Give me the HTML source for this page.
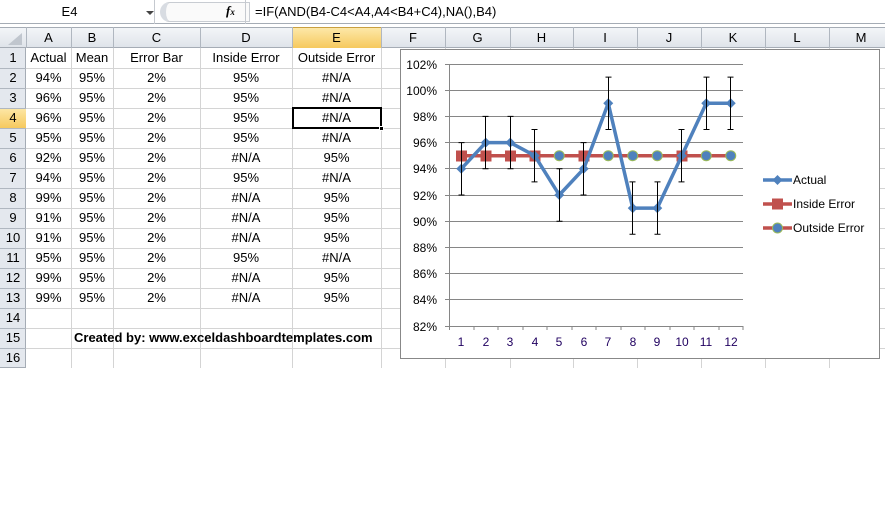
<!DOCTYPE html>
<html><head><meta charset="utf-8"><style>
*{margin:0;padding:0;box-sizing:border-box}
body{width:885px;height:512px;background:#fff;position:relative;overflow:hidden;font-family:"Liberation Sans",sans-serif;font-size:13px;color:#000}
.a{position:absolute}
.c{position:absolute;text-align:center;line-height:20px;height:20px;white-space:nowrap}
</style></head><body>
<div class="a" style="left:0;top:0;width:885px;height:24px;background:#fff;border-bottom:1px solid #a5acb5"></div>
<div class="a" style="left:0;top:0;width:155px;height:24px;border-right:1px solid #c5c9cf;text-align:center;line-height:24px;padding-right:15px">E4</div>
<div class="a" style="left:146px;top:11px;width:0;height:0;border-left:4px solid transparent;border-right:4px solid transparent;border-top:4px solid #444"></div>
<div class="a" style="left:160px;top:2px;width:90px;height:20px;border:1px solid #c8ccd2;border-left:6px solid #d8dce2;border-radius:10px 0 0 10px;background:#fafafa"></div>
<div class="a" style="left:226px;top:3px;font-family:'Liberation Serif',serif;font-style:italic;font-weight:bold;font-size:13px">f<span style="font-size:9px">x</span></div>
<div class="a" style="left:245px;top:0;width:640px;height:24px;border-left:1px solid #c5c9cf;line-height:24px;padding-left:9px">=IF(AND(B4-C4&lt;A4,A4&lt;B4+C4),NA(),B4)</div>
<div class="a" style="left:0;top:27px;width:885px;height:21px;background:linear-gradient(#f3f5f8,#dfe4ea);border-top:1px solid #a5acb5;border-bottom:1px solid #a5acb5"></div>
<div class="a" style="left:292px;top:27px;width:89px;height:21px;background:linear-gradient(#fde8a8,#f6c95e);border-top:1px solid #c9a040"></div>
<div class="a" style="left:0;top:48px;width:26px;height:320px;background:#e4e8ee;border-right:1px solid #a5acb5"></div>
<div class="a" style="left:0;top:108px;width:26px;height:20px;background:linear-gradient(#fde8a8,#f6c95e)"></div>
<div class="a" style="left:0;top:367px;width:26px;height:1px;background:#a5acb5"></div>
<svg class="a" style="left:0;top:27px" width="885" height="341">
<g stroke="#d4d4d4" stroke-width="1">
<line x1="26" y1="41.5" x2="885" y2="41.5"/><line x1="26" y1="61.5" x2="885" y2="61.5"/><line x1="26" y1="81.5" x2="885" y2="81.5"/><line x1="26" y1="101.5" x2="885" y2="101.5"/><line x1="26" y1="121.5" x2="885" y2="121.5"/><line x1="26" y1="141.5" x2="885" y2="141.5"/><line x1="26" y1="161.5" x2="885" y2="161.5"/><line x1="26" y1="181.5" x2="885" y2="181.5"/><line x1="26" y1="201.5" x2="885" y2="201.5"/><line x1="26" y1="221.5" x2="885" y2="221.5"/><line x1="26" y1="241.5" x2="885" y2="241.5"/><line x1="26" y1="261.5" x2="885" y2="261.5"/><line x1="26" y1="281.5" x2="885" y2="281.5"/><line x1="26" y1="301.5" x2="885" y2="301.5"/><line x1="26" y1="321.5" x2="885" y2="321.5"/>
<line x1="71.5" y1="21" x2="71.5" y2="341"/><line x1="113.5" y1="21" x2="113.5" y2="341"/><line x1="200.5" y1="21" x2="200.5" y2="341"/><line x1="292.5" y1="21" x2="292.5" y2="341"/><line x1="381.5" y1="21" x2="381.5" y2="341"/><line x1="445.5" y1="21" x2="445.5" y2="341"/><line x1="510.5" y1="21" x2="510.5" y2="341"/><line x1="573.5" y1="21" x2="573.5" y2="341"/><line x1="637.5" y1="21" x2="637.5" y2="341"/><line x1="701.5" y1="21" x2="701.5" y2="341"/><line x1="765.5" y1="21" x2="765.5" y2="341"/><line x1="829.5" y1="21" x2="829.5" y2="341"/>
</g>
<g stroke="#b0b7c0"><line x1="26.5" y1="0" x2="26.5" y2="21"/><line x1="71.5" y1="0" x2="71.5" y2="21"/><line x1="113.5" y1="0" x2="113.5" y2="21"/><line x1="200.5" y1="0" x2="200.5" y2="21"/><line x1="292.5" y1="0" x2="292.5" y2="21"/><line x1="381.5" y1="0" x2="381.5" y2="21"/><line x1="445.5" y1="0" x2="445.5" y2="21"/><line x1="510.5" y1="0" x2="510.5" y2="21"/><line x1="573.5" y1="0" x2="573.5" y2="21"/><line x1="637.5" y1="0" x2="637.5" y2="21"/><line x1="701.5" y1="0" x2="701.5" y2="21"/><line x1="765.5" y1="0" x2="765.5" y2="21"/><line x1="829.5" y1="0" x2="829.5" y2="21"/>
<line x1="0" y1="41.5" x2="26" y2="41.5"/><line x1="0" y1="61.5" x2="26" y2="61.5"/><line x1="0" y1="81.5" x2="26" y2="81.5"/><line x1="0" y1="101.5" x2="26" y2="101.5"/><line x1="0" y1="121.5" x2="26" y2="121.5"/><line x1="0" y1="141.5" x2="26" y2="141.5"/><line x1="0" y1="161.5" x2="26" y2="161.5"/><line x1="0" y1="181.5" x2="26" y2="181.5"/><line x1="0" y1="201.5" x2="26" y2="201.5"/><line x1="0" y1="221.5" x2="26" y2="221.5"/><line x1="0" y1="241.5" x2="26" y2="241.5"/><line x1="0" y1="261.5" x2="26" y2="261.5"/><line x1="0" y1="281.5" x2="26" y2="281.5"/><line x1="0" y1="301.5" x2="26" y2="301.5"/><line x1="0" y1="321.5" x2="26" y2="321.5"/></g>
<polygon points="8,18 22,18 22,6" fill="#c0c6ce"/>
</svg>
<div class="c" style="top:28px;left:26px;width:45px">A</div><div class="c" style="top:28px;left:71px;width:42px">B</div><div class="c" style="top:28px;left:113px;width:87px">C</div><div class="c" style="top:28px;left:200px;width:92px">D</div><div class="c" style="top:28px;left:292px;width:89px">E</div><div class="c" style="top:28px;left:381px;width:64px">F</div><div class="c" style="top:28px;left:445px;width:65px">G</div><div class="c" style="top:28px;left:510px;width:63px">H</div><div class="c" style="top:28px;left:573px;width:64px">I</div><div class="c" style="top:28px;left:637px;width:64px">J</div><div class="c" style="top:28px;left:701px;width:64px">K</div><div class="c" style="top:28px;left:765px;width:64px">L</div><div class="c" style="top:28px;left:829px;width:64px">M</div>
<div class="a" style="left:0;top:48px;width:26px;line-height:20px;text-align:center">1<br>2<br>3<br>4<br>5<br>6<br>7<br>8<br>9<br>10<br>11<br>12<br>13<br>14<br>15<br>16</div>
<div class="a" style="left:26px;top:48px;width:45px;line-height:20px;text-align:center">Actual<br>94%<br>96%<br>96%<br>95%<br>92%<br>94%<br>99%<br>91%<br>91%<br>95%<br>99%<br>99%</div>
<div class="a" style="left:71px;top:48px;width:42px;line-height:20px;text-align:center">Mean<br>95%<br>95%<br>95%<br>95%<br>95%<br>95%<br>95%<br>95%<br>95%<br>95%<br>95%<br>95%</div>
<div class="a" style="left:113px;top:48px;width:87px;line-height:20px;text-align:center">Error Bar<br>2%<br>2%<br>2%<br>2%<br>2%<br>2%<br>2%<br>2%<br>2%<br>2%<br>2%<br>2%</div>
<div class="a" style="left:200px;top:48px;width:92px;line-height:20px;text-align:center">Inside Error<br>95%<br>95%<br>95%<br>95%<br>#N/A<br>95%<br>#N/A<br>#N/A<br>#N/A<br>95%<br>#N/A<br>#N/A</div>
<div class="a" style="left:292px;top:48px;width:89px;line-height:20px;text-align:center">Outside Error<br>#N/A<br>#N/A<br>#N/A<br>#N/A<br>95%<br>#N/A<br>95%<br>95%<br>95%<br>#N/A<br>95%<br>95%</div>
<div class="a" style="left:292px;top:107px;width:90px;height:22px;border:2px solid #000"></div>
<div class="a" style="left:379px;top:126px;width:5px;height:5px;background:#000;border:1px solid #fff"></div>
<div class="a" style="left:74px;top:328px;line-height:20px;font-weight:bold;white-space:nowrap">Created by: www.exceldashboardtemplates.com</div>
<svg class="a" style="left:0;top:0" width="885" height="512" font-family="Liberation Sans, sans-serif" font-size="12">
<rect x="400.5" y="49.5" width="479" height="309" fill="#fff" stroke="#888"/>
<g stroke="#868686" stroke-width="1">
<line x1="449" y1="64.5" x2="743" y2="64.5"/><line x1="449" y1="90.5" x2="743" y2="90.5"/><line x1="449" y1="116.5" x2="743" y2="116.5"/><line x1="449" y1="142.5" x2="743" y2="142.5"/><line x1="449" y1="168.5" x2="743" y2="168.5"/><line x1="449" y1="195.5" x2="743" y2="195.5"/><line x1="449" y1="221.5" x2="743" y2="221.5"/><line x1="449" y1="247.5" x2="743" y2="247.5"/><line x1="449" y1="273.5" x2="743" y2="273.5"/><line x1="449" y1="299.5" x2="743" y2="299.5"/><line x1="445" y1="326.5" x2="743" y2="326.5"/>
<line x1="449.5" y1="64" x2="449.5" y2="326"/>
<line x1="445" y1="64.5" x2="449" y2="64.5"/><line x1="445" y1="90.5" x2="449" y2="90.5"/><line x1="445" y1="116.5" x2="449" y2="116.5"/><line x1="445" y1="142.5" x2="449" y2="142.5"/><line x1="445" y1="168.5" x2="449" y2="168.5"/><line x1="445" y1="195.5" x2="449" y2="195.5"/><line x1="445" y1="221.5" x2="449" y2="221.5"/><line x1="445" y1="247.5" x2="449" y2="247.5"/><line x1="445" y1="273.5" x2="449" y2="273.5"/><line x1="445" y1="299.5" x2="449" y2="299.5"/>
<line x1="474" y1="326" x2="474" y2="330"/><line x1="498" y1="326" x2="498" y2="330"/><line x1="523" y1="326" x2="523" y2="330"/><line x1="547" y1="326" x2="547" y2="330"/><line x1="572" y1="326" x2="572" y2="330"/><line x1="596" y1="326" x2="596" y2="330"/><line x1="621" y1="326" x2="621" y2="330"/><line x1="645" y1="326" x2="645" y2="330"/><line x1="670" y1="326" x2="670" y2="330"/><line x1="694" y1="326" x2="694" y2="330"/><line x1="719" y1="326" x2="719" y2="330"/><line x1="743" y1="326" x2="743" y2="330"/><line x1="449.5" y1="326" x2="449.5" y2="330"/>
</g>
<g text-anchor="end" fill="#000"><text x="437" y="69">102%</text><text x="437" y="95">100%</text><text x="437" y="121">98%</text><text x="437" y="147">96%</text><text x="437" y="173">94%</text><text x="437" y="200">92%</text><text x="437" y="226">90%</text><text x="437" y="252">88%</text><text x="437" y="278">86%</text><text x="437" y="304">84%</text><text x="437" y="331">82%</text></g>
<g text-anchor="middle" fill="#200060"><text x="461" y="346">1</text><text x="486" y="346">2</text><text x="510" y="346">3</text><text x="535" y="346">4</text><text x="559" y="346">5</text><text x="584" y="346">6</text><text x="608" y="346">7</text><text x="633" y="346">8</text><text x="657" y="346">9</text><text x="682" y="346">10</text><text x="706" y="346">11</text><text x="731" y="346">12</text></g>
<polyline points="461.25,155.7 730.75,155.7" stroke="#c0504d" stroke-width="3.5" fill="none"/>
<g fill="#c0504d"><rect x="456" y="150.5" width="11" height="11"/><rect x="480.5" y="150.5" width="11" height="11"/><rect x="505" y="150.5" width="11" height="11"/><rect x="529.5" y="150.5" width="11" height="11"/><rect x="578.5" y="150.5" width="11" height="11"/><rect x="676.5" y="150.5" width="11" height="11"/></g>
<g fill="#4f81bd" stroke="#9bbb59" stroke-width="1"><circle cx="559.25" cy="155.7" r="5"/><circle cx="608.25" cy="155.7" r="5"/><circle cx="632.75" cy="155.7" r="5"/><circle cx="657.25" cy="155.7" r="5"/><circle cx="706.25" cy="155.7" r="5"/><circle cx="730.75" cy="155.7" r="5"/></g>
<polyline points="461.25,168.8 485.75,142.6 510.25,142.6 534.75,155.7 559.25,195 583.75,168.8 608.25,103.3 632.75,208.1 657.25,208.1 681.75,155.7 706.25,103.3 730.75,103.3" stroke="#4f81bd" stroke-width="3.5" fill="none" stroke-linejoin="round"/>
<g fill="#4f81bd"><path d="M461.25 163.8l5 5-5 5-5-5z"/><path d="M485.75 137.6l5 5-5 5-5-5z"/><path d="M510.25 137.6l5 5-5 5-5-5z"/><path d="M534.75 150.7l5 5-5 5-5-5z"/><path d="M559.25 190l5 5-5 5-5-5z"/><path d="M583.75 163.8l5 5-5 5-5-5z"/><path d="M608.25 98.3l5 5-5 5-5-5z"/><path d="M632.75 203.1l5 5-5 5-5-5z"/><path d="M657.25 203.1l5 5-5 5-5-5z"/><path d="M681.75 150.7l5 5-5 5-5-5z"/><path d="M706.25 98.3l5 5-5 5-5-5z"/><path d="M730.75 98.3l5 5-5 5-5-5z"/></g>
<g stroke="#000" stroke-width="1" fill="none">
<path d="M461.5 142.6v52.4M458.5 142.6h6M458.5 195h6"/>
<path d="M485.5 116.4v52.4M482.5 116.4h6M482.5 168.8h6"/>
<path d="M510.5 116.4v52.4M507.5 116.4h6M507.5 168.8h6"/>
<path d="M534.5 129.5v52.4M531.5 129.5h6M531.5 181.9h6"/>
<path d="M559.5 168.8v52.4M556.5 168.8h6M556.5 221.2h6"/>
<path d="M583.5 142.6v52.4M580.5 142.6h6M580.5 195h6"/>
<path d="M608.5 77.1v52.4M605.5 77.1h6M605.5 129.5h6"/>
<path d="M632.5 181.9v52.4M629.5 181.9h6M629.5 234.3h6"/>
<path d="M657.5 181.9v52.4M654.5 181.9h6M654.5 234.3h6"/>
<path d="M681.5 129.5v52.4M678.5 129.5h6M678.5 181.9h6"/>
<path d="M706.5 77.1v52.4M703.5 77.1h6M703.5 129.5h6"/>
<path d="M730.5 77.1v52.4M727.5 77.1h6M727.5 129.5h6"/>
</g>
<line x1="763" y1="180" x2="792" y2="180" stroke="#4f81bd" stroke-width="3.5"/><path d="M777.5 175l5 5-5 5-5-5z" fill="#4f81bd"/>
<line x1="763" y1="204" x2="792" y2="204" stroke="#c0504d" stroke-width="3.5"/><rect x="772" y="198.5" width="11" height="11" fill="#c0504d"/>
<line x1="763" y1="228" x2="792" y2="228" stroke="#c0504d" stroke-width="3.5"/><circle cx="777.5" cy="228" r="5" fill="#4f81bd" stroke="#9bbb59"/>
<g fill="#000"><text x="793" y="184">Actual</text><text x="793" y="208">Inside Error</text><text x="793" y="232">Outside Error</text></g>
</svg>
</body></html>
